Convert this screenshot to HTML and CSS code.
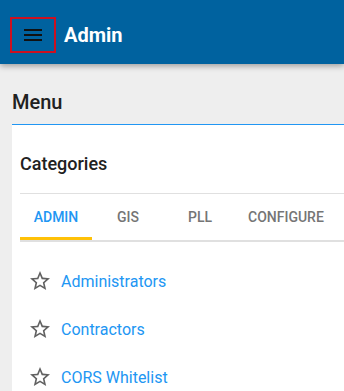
FILE: index.html
```html
<!DOCTYPE html>
<html lang="en">
<head>
    <meta charset="UTF-8">
    <meta name="viewport" content="width=device-width, initial-scale=1.0">
    <title>Admin</title>
    <link rel="stylesheet" href="styles.css">
</head>
<body>
    <header class="toolbar">
        <button class="menu-button" aria-label="Menu">
            <svg width="24" height="24" viewBox="0 0 24 24">
                <path d="M3 18h18v-2H3v2zm0-5h18v-2H3v2zm0-7v2h18V6H3z" fill="#111"/>
            </svg>
        </button>
        <span class="toolbar-title">Admin</span>
    </header>

    <main class="page">
        <h1 class="page-title">Menu</h1>

        <section class="card">
            <h2 class="card-title">Categories</h2>

            <nav class="tabs">
                <div class="tab active">Admin</div>
                <div class="tab">GIS</div>
                <div class="tab">PLL</div>
                <div class="tab">Configure</div>
            </nav>

            <ul class="menu-list">
                <li class="menu-item">
                    <svg class="star" width="24" height="24" viewBox="0 0 24 24">
                        <path d="M22 9.24l-7.19-.62L12 2 9.19 8.63 2 9.24l5.46 4.73L5.82 21 12 17.27 18.18 21l-1.63-7.03L22 9.24zM12 15.4l-3.76 2.27 1-4.28-3.32-2.88 4.38-.38L12 6.1l1.71 4.04 4.38.38-3.32 2.88 1 4.28L12 15.4z"/>
                    </svg>
                    <a href="#">Administrators</a>
                </li>
                <li class="menu-item">
                    <svg class="star" width="24" height="24" viewBox="0 0 24 24">
                        <path d="M22 9.24l-7.19-.62L12 2 9.19 8.63 2 9.24l5.46 4.73L5.82 21 12 17.27 18.18 21l-1.63-7.03L22 9.24zM12 15.4l-3.76 2.27 1-4.28-3.32-2.88 4.38-.38L12 6.1l1.71 4.04 4.38.38-3.32 2.88 1 4.28L12 15.4z"/>
                    </svg>
                    <a href="#">Contractors</a>
                </li>
                <li class="menu-item">
                    <svg class="star" width="24" height="24" viewBox="0 0 24 24">
                        <path d="M22 9.24l-7.19-.62L12 2 9.19 8.63 2 9.24l5.46 4.73L5.82 21 12 17.27 18.18 21l-1.63-7.03L22 9.24zM12 15.4l-3.76 2.27 1-4.28-3.32-2.88 4.38-.38L12 6.1l1.71 4.04 4.38.38-3.32 2.88 1 4.28L12 15.4z"/>
                    </svg>
                    <a href="#">CORS Whitelist</a>
                </li>
            </ul>
        </section>
    </main>
</body>
</html>
```

FILE: styles.css
```css
body {
    margin: 0;
    font-family: Roboto, "Noto Sans", sans-serif;
    background-color: #eeeeee;
    color: #212121;
    overflow: hidden;
}
.toolbar {
    display: flex;
    align-items: center;
    box-sizing: border-box;
    height: 64px;
    padding: 6px 0 0 10px;
    background-color: #00629f;
    box-shadow: 0 2px 6px rgba(0,0,0,0.35);
}
.menu-button {
    display: flex;
    align-items: center;
    justify-content: center;
    width: 46px;
    height: 36px;
    padding: 0;
    background: transparent;
    border: 2px solid #cc1020;
    cursor: pointer;
}
.toolbar-title {
    margin-left: 8px;
    color: #fff;
    font-size: 20px;
    font-weight: 700;
}
.page {
    padding-left: 12px;
}
.page-title {
    margin: 26px 0 10px;
    font-size: 20px;
    line-height: 24px;
    font-weight: 500;
}
.card {
    background-color: #fff;
    border-top: 1px solid #2196f3;
    padding: 27px 0 0 8px;
}
.card-title {
    margin: 0 0 17px;
    font-size: 18px;
    line-height: 24px;
    font-weight: 500;
}
.tabs {
    display: flex;
    border-top: 1px solid #e0e0e0;
    border-bottom: 2px solid #e0e0e0;
}
.tab {
    display: flex;
    align-items: center;
    justify-content: center;
    box-sizing: border-box;
    min-width: 72px;
    height: 46px;
    padding: 3px 12px 0;
    border-bottom: 3px solid transparent;
    font-size: 14px;
    font-weight: 500;
    text-transform: uppercase;
    color: #757575;
}
.tab.active {
    color: #2196f3;
    border-bottom-color: #ffc107;
}
.menu-list {
    list-style: none;
    margin: 0;
    padding: 15px 0 0 8px;
}
.menu-item {
    display: flex;
    align-items: center;
    height: 48px;
}
.star {
    fill: #616161;
}
.menu-item a {
    margin-left: 9px;
    font-size: 16px;
    color: #2196f3;
    text-decoration: none;
}
```
